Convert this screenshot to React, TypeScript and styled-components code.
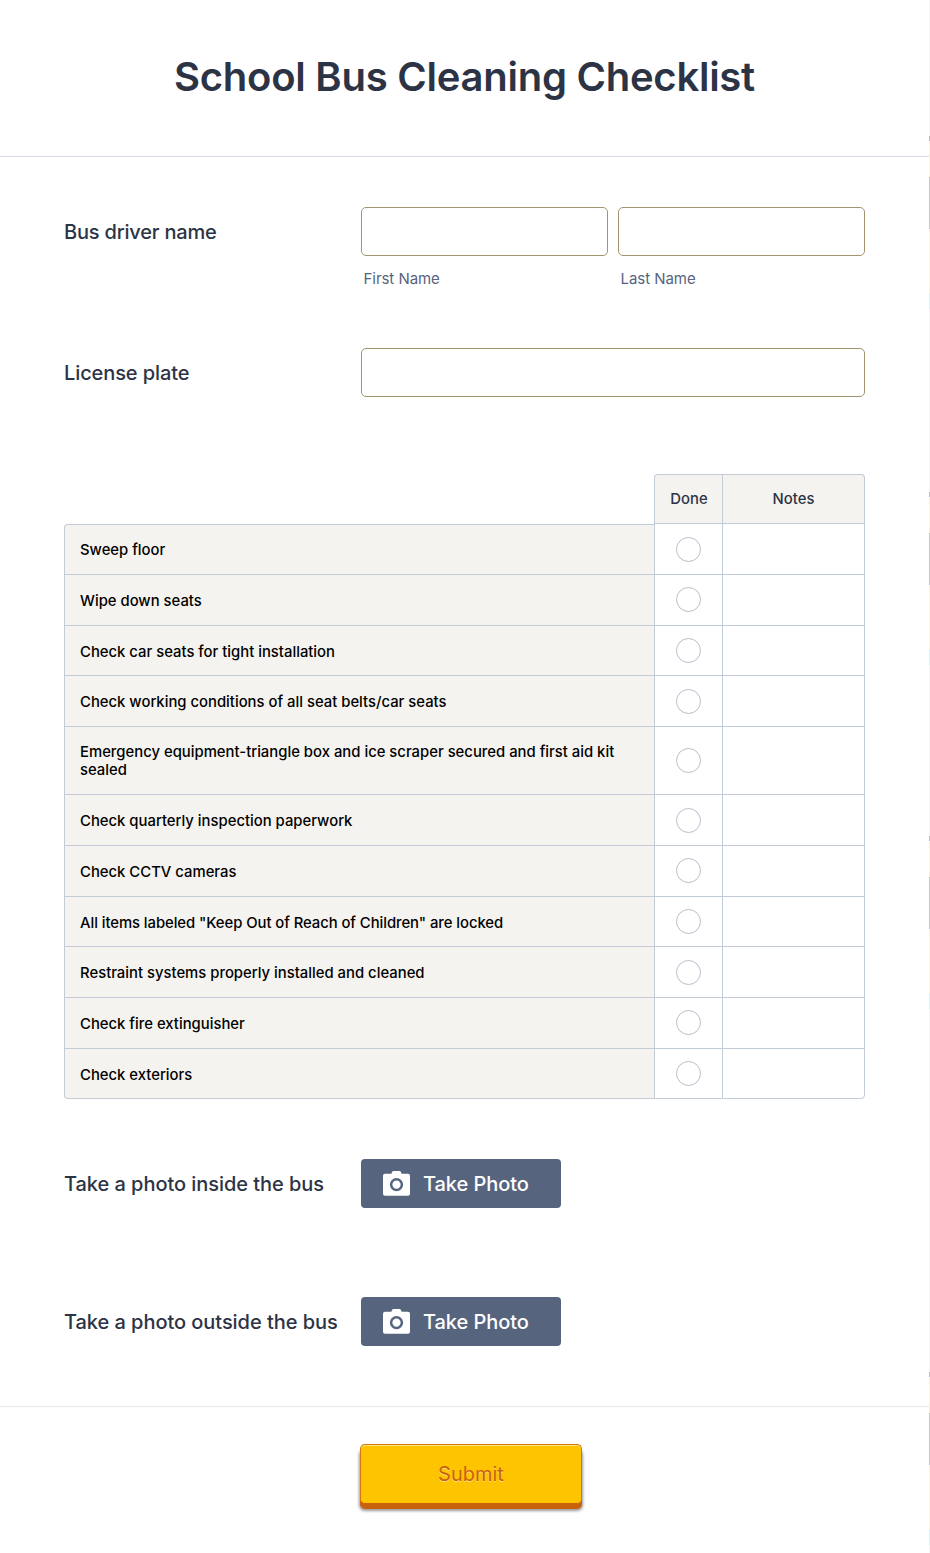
import React from "react";
import styled, { createGlobalStyle } from "styled-components";

const GlobalStyle = createGlobalStyle`
  *, *::before, *::after { box-sizing: border-box; }
  body { margin: 0; background: #fff; font-family: Inter, "Liberation Sans", sans-serif; color: #2c3345; }
  h1, p { margin: 0; }
`;

const Page = styled.main`
  position: relative;
  width: 930px;
  height: 1553px;
  overflow: hidden;
  background: #fff;
`;

const PageEdge = styled.div`
  position: absolute;
  top: 0;
  right: 0;
  width: 1px;
  height: 100%;
  background: linear-gradient(
    #f3f3f3 0 136px, #bdbdbd 136px 141px, #fbf3da 141px 177px, #c6c6c6 177px 229px, #fbf3da 229px 293px, #dff3f5 293px 309px,
    #f3f3f3 309px 492px, #bdbdbd 492px 497px, #fbf3da 497px 533px, #c6c6c6 533px 585px, #fbf3da 585px 649px, #dff3f5 649px 665px,
    #f3f3f3 665px 836px, #bdbdbd 836px 841px, #fbf3da 841px 877px, #c6c6c6 877px 929px, #fbf3da 929px 993px, #dff3f5 993px 1009px,
    #f3f3f3 1009px 1372px, #bdbdbd 1372px 1377px, #fbf3da 1377px 1413px, #c6c6c6 1413px 1465px, #fbf3da 1465px 1529px, #dff3f5 1529px 1545px,
    #f3f3f3 1545px
  );
`;

const Header = styled.header`
  display: flex;
  justify-content: center;
  height: 157px;
  padding: 52px 1px 0 0;
  border-bottom: 1px solid #d7dbe5;
`;

const Title = styled.h1`
  font-size: 40px;
  line-height: 50px;
  font-weight: 600;
  letter-spacing: -0.25px;
  white-space: nowrap;
`;

const Body = styled.section`
  height: 1250px;
  padding: 50px 64px 0;
  border-bottom: 1px solid #e6e8f0;
`;

const Field = styled.div<{ $height: number }>`
  display: flex;
  align-items: flex-start;
  height: ${(p) => p.$height}px;
`;

const Label = styled.label<{ $tracking?: number }>`
  flex: 0 0 297px;
  font-size: 20px;
  line-height: 50px;
  font-weight: 500;
  letter-spacing: ${(p) => p.$tracking ?? -0.05}px;
  white-space: nowrap;
`;

const Inputs = styled.div`
  display: grid;
  grid-auto-flow: column;
  grid-auto-columns: 1fr;
  gap: 10px;
  width: 504px;
`;

const TextInput = styled.input`
  display: block;
  width: 100%;
  height: 49px;
  border: 1px solid #a39370;
  border-radius: 5px;
  background: #fff;
  outline: none;
`;

const SubLabel = styled.p`
  margin: 14px 0 0 2.5px;
  font-size: 15px;
  line-height: 18px;
  letter-spacing: -0.05px;
  color: #57647e;
`;

const Matrix = styled.div`
  width: 801px;
  margin-bottom: 60px;
`;

const HeadRow = styled.div`
  display: grid;
  grid-template-columns: 68px 1fr;
  width: 211px;
  height: 49.4px;
  margin-left: auto;
  border: 1px solid #c3cad8;
  border-bottom: 0;
  border-radius: 4px 4px 0 0;
  background: #f5f3ef;
`;

const HeadCell = styled.div`
  display: flex;
  align-items: center;
  justify-content: center;
  padding-bottom: 0.4px;
  font-size: 14.85px;
  line-height: 18px;
  font-weight: 500;
  & + & { border-left: 1px solid #c3cad8; margin-left: -1px; }
`;

const Row = styled.div<{ $tall?: boolean }>`
  display: grid;
  grid-template-columns: 590px 68px 143px;
  height: ${(p) => (p.$tall ? 68.4 : 50.66)}px;
  &:last-child { height: 51.4px; }
`;

const Cell = styled.div`
  display: flex;
  align-items: center;
  justify-content: center;
  border-left: 1px solid #c3cad8;
  border-top: 1px solid #c3cad8;
  &:last-child { border-right: 1px solid #c3cad8; }
  ${Row}:last-child & { border-bottom: 1px solid #c3cad8; }
  ${Row}:last-child &:last-child { border-bottom-right-radius: 4px; }
`;

const NameCell = styled(Cell)<{ $tall?: boolean; $tracking?: number }>`
  justify-content: flex-start;
  padding: ${(p) => (p.$tall ? 0.4 : 2)}px 30px 0 15px;
  background: #f5f3ef;
  color: #000;
  font-size: 14.85px;
  line-height: 18px;
  font-weight: 500;
  letter-spacing: ${(p) => p.$tracking ?? 0}px;
  ${Row}:nth-child(2) & { margin-top: 1px; padding-top: 0; border-top-left-radius: 4px; }
  ${Row}:last-child & { padding-top: 3px; border-bottom-left-radius: 4px; }
`;

const Radio = styled.input`
  appearance: none;
  width: 25px;
  height: 25px;
  margin: 0;
  border: 1px solid #b8bfcc;
  border-radius: 50%;
  background: #fff;
`;

const PhotoButton = styled.button`
  display: flex;
  align-items: center;
  gap: 13px;
  width: 200px;
  height: 49px;
  padding: 0 22px;
  border: 0;
  border-radius: 4px;
  background: #57647e;
  color: #fff;
  font: 500 20px/24px Inter, sans-serif;
  letter-spacing: -0.05px;
  white-space: nowrap;
`;

const Footer = styled.footer`
  display: flex;
  padding: 37px 0 0 360px;
`;

const SubmitButton = styled.button`
  width: 222px;
  height: 60px;
  padding: 0;
  border: 1px solid #d5780c;
  border-bottom-color: #c9620f;
  border-radius: 5px;
  background: #ffc400;
  box-shadow: inset 0 1px 0 #ffdf80, 0 5px 0 #c9620f, 0 6px 3px 1px rgba(0, 0, 0, 0.4);
  color: #c9620f;
  font: 400 20px/24px Inter, sans-serif;
  letter-spacing: 0;
  text-shadow: 0 1px 0 #ffdf80;
`;

const CameraIcon = () => (
  <svg width="27" height="25" viewBox="0 0 27 25" fill="none">
    <path fill="#fff" d="M2 2.8h6.3L9.2.8Q9.6 0 10.5 0h6q.9 0 1.3.8l.9 2H25q2 0 2 2v18q0 2-2 2H2q-2 0-2-2v-18q0-2 2-2Z" />
    <circle cx="13.5" cy="13.6" r="5.4" stroke="#57647e" strokeWidth="2.5" />
  </svg>
);

const tasks: { name: string; tracking?: number; tall?: boolean }[] = [
  { name: "Sweep floor" },
  { name: "Wipe down seats" },
  { name: "Check car seats for tight installation" },
  { name: "Check working conditions of all seat belts/car seats" },
  { name: "Emergency equipment-triangle box and ice scraper secured and first aid kit sealed", tall: true },
  { name: "Check quarterly inspection paperwork" },
  { name: "Check CCTV cameras" },
  { name: 'All items labeled "Keep Out of Reach of Children" are locked', tracking: -0.06 },
  { name: "Restraint systems properly installed and cleaned" },
  { name: "Check fire extinguisher" },
  { name: "Check exteriors" },
];

export default function App() {
  return (
    <>
      <GlobalStyle />
      <Page>
        <Header>
          <Title>School Bus Cleaning Checklist</Title>
        </Header>
        <Body>
          <Field $height={141}>
            <Label $tracking={-0.2}>Bus driver name</Label>
            <Inputs>
              <div>
                <TextInput />
                <SubLabel>First Name</SubLabel>
              </div>
              <div>
                <TextInput />
                <SubLabel>Last Name</SubLabel>
              </div>
            </Inputs>
          </Field>
          <Field $height={126}>
            <Label $tracking={-0.1}>License plate</Label>
            <Inputs>
              <TextInput />
            </Inputs>
          </Field>
          <Matrix>
            <HeadRow>
              <HeadCell>Done</HeadCell>
              <HeadCell>Notes</HeadCell>
            </HeadRow>
            {tasks.map((task) => (
              <Row key={task.name} $tall={task.tall}>
                <NameCell $tall={task.tall} $tracking={task.tracking}>
                  {task.name}
                </NameCell>
                <Cell>
                  <Radio type="radio" name={task.name} />
                </Cell>
                <Cell />
              </Row>
            ))}
          </Matrix>
          <Field $height={138}>
            <Label>Take a photo inside the bus</Label>
            <PhotoButton>
              <CameraIcon />
              Take Photo
            </PhotoButton>
          </Field>
          <Field $height={50}>
            <Label>Take a photo outside the bus</Label>
            <PhotoButton>
              <CameraIcon />
              Take Photo
            </PhotoButton>
          </Field>
        </Body>
        <Footer>
          <SubmitButton>Submit</SubmitButton>
        </Footer>
        <PageEdge />
      </Page>
    </>
  );
}
